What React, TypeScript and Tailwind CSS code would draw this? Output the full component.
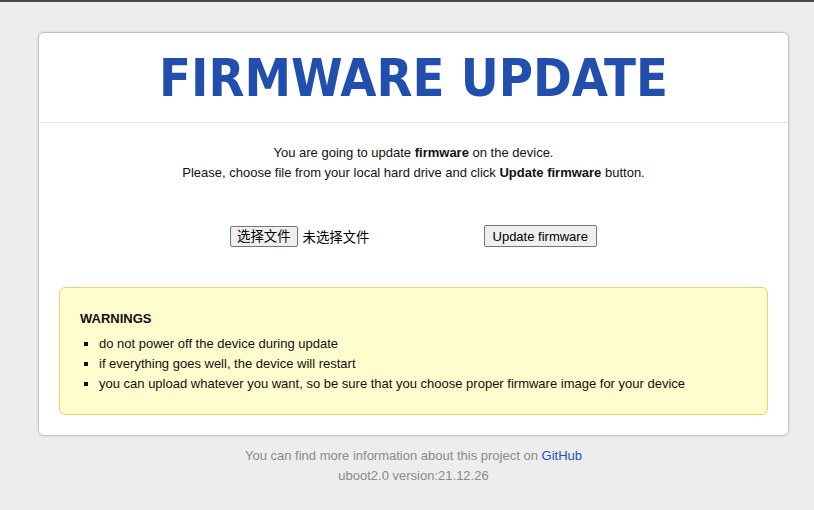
import React from "react";

const warnings = [
  "do not power off the device during update",
  "if everything goes well, the device will restart",
  "you can upload whatever you want, so be sure that you choose proper firmware image for your device",
];

export default function App() {
  return (
    <div className="min-h-[510px] bg-[#ededed] border-t-2 border-[#4a4a4a] font-['Liberation_Sans',Arial,sans-serif] text-[13px] text-[#111]">
      <div className="ml-[38px] w-[751px] pt-[30px]">
        {/* main card */}
        <div className="rounded-[6px] border border-[#c4c4c4] bg-white shadow-[0_0_3px_rgba(0,0,0,0.12)]">
          <div className="flex h-[90px] items-center justify-center border-b border-[#e6e6e6]">
            <h1 className="font-['DejaVu_Sans_Condensed','DejaVu_Sans',sans-serif] text-[52px] font-bold leading-none text-[#224fae]">
              FIRMWARE UPDATE
            </h1>
          </div>

          <div className="px-[20px] pb-[20px] pt-[20px]">
            <div className="text-center leading-[20px]">
              <p>
                You are going to update <b>firmware</b> on the device.
              </p>
              <p>
                Please, choose file from your local hard drive and click{" "}
                <b>Update firmware</b> button.
              </p>
            </div>

            <form className="flex items-center pl-[171px] pt-[42px]">
              <div className="flex items-center">
                <button
                  type="button"
                  className="h-[21px] rounded-[2px] border border-[#767676] bg-[#efefef] px-[6px] font-['Noto_Sans_CJK_SC',sans-serif] text-[13.4px] leading-none text-black"
                >
                  选择文件
                </button>
                <span className="ml-[5px] font-['Noto_Sans_CJK_SC',sans-serif] text-[13.4px] text-black">
                  未选择文件
                </span>
              </div>
              <button
                type="button"
                className="ml-[114px] h-[22px] rounded-[2px] border border-[#767676] bg-[#efefef] px-[8px] text-[13px] leading-none text-black"
              >
                Update firmware
              </button>
            </form>

            {/* warnings */}
            <div className="mt-[40px] rounded-[6px] border border-[#f3cf6b] bg-[#fffccd] px-[20px] pb-[20px] pt-[22px]">
              <h3 className="font-bold leading-[18px]">WARNINGS</h3>
              <ul className="mt-[6px] list-[square] pl-[19px] leading-[20px]">
                {warnings.map((w) => (
                  <li key={w}>{w}</li>
                ))}
              </ul>
            </div>
          </div>
        </div>

        {/* footer */}
        <div className="pt-[10px] text-center leading-[20px] text-[#8a8a8a]">
          <p>
            You can find more information about this project on{" "}
            <a href="#" className="text-[#2453b4]">
              GitHub
            </a>
          </p>
          <p>uboot2.0 version:21.12.26</p>
        </div>
      </div>
    </div>
  );
}
